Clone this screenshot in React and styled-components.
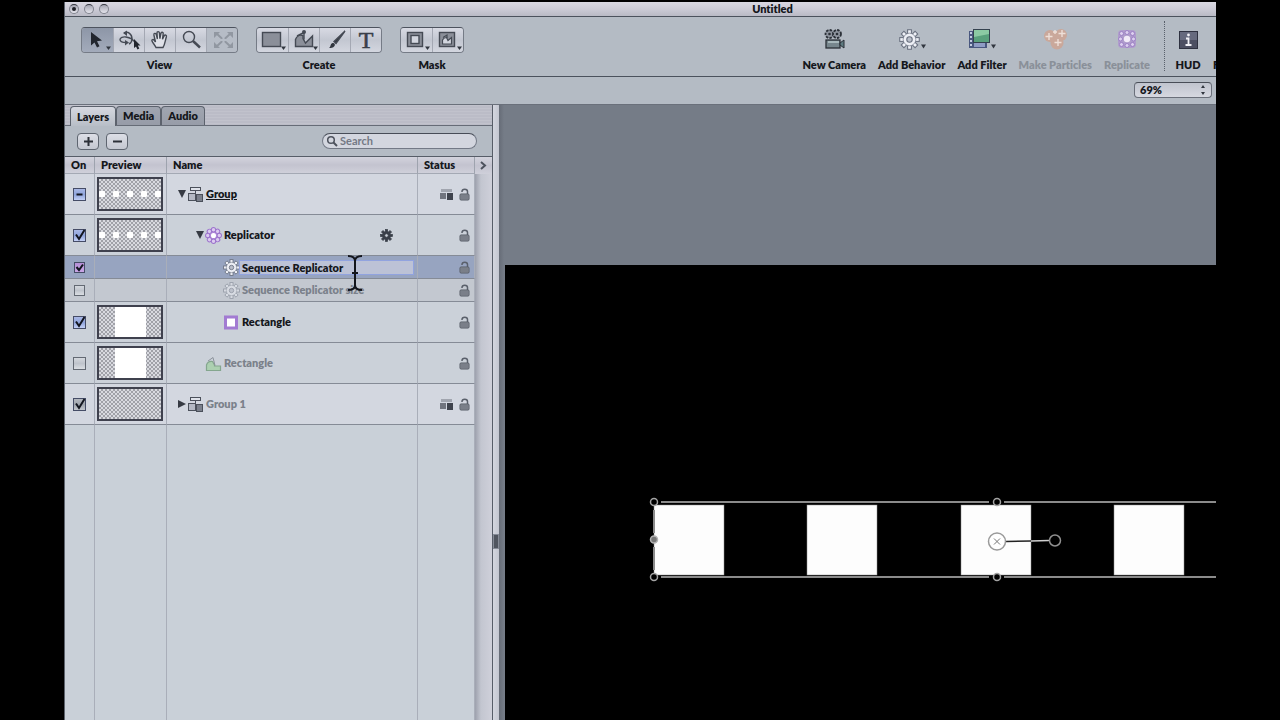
import React, { useState } from 'react';
import styled, { createGlobalStyle, css } from 'styled-components';

const GlobalStyle = createGlobalStyle`
  * {
    box-sizing: border-box;
  }

  body {
    margin: 0;
    background: #000;
    color: #15171c;
    font-family: Lato, 'Open Sans', sans-serif;
    font-size: 11px;
    font-weight: 800;
    font-variant-ligatures: none;
    line-height: 16px;
  }

  button, input, select {
    font: inherit;
    font-variant-ligatures: none;
    color: inherit;
    margin: 0;
  }
`;

const Desktop = styled.div`
  display: flex;
  min-height: 100vh;
  padding: 2px 64px 0;
  background: #000;
`;

const Window = styled.main`
  flex: 1;
  min-width: 0;
  display: flex;
  flex-direction: column;
  overflow: hidden;
  border-left: 1px solid #5d636d;
  background: #b4bbc4;
`;

const TitleBar = styled.header`
  display: flex;
  align-items: center;
  height: 15px;
  padding-left: 4px;
  background: linear-gradient(#d9d8e1, #cccbd6 50%, #b9bac5);
  border-bottom: 1px solid #4b525d;
`;

const WindowButtons = styled.div`
  display: flex;
  gap: 5px;
  width: 260px;
`;

const WindowButton = styled.button`
  display: grid;
  place-items: center;
  width: 10px;
  height: 10px;
  padding: 0;
  border: 1px solid #80838e;
  border-top-color: #33363f;
  border-radius: 50%;
  background: linear-gradient(#a4a5b1, #e4e4ec);

  &::before {
    content: '';
    width: 4px;
    height: 4px;
    border-radius: 50%;
    background: ${props => (props.$edited ? '#1d1f26' : 'transparent')};
  }
`;

const Title = styled.h1`
  flex: 1;
  margin: 0;
  font-size: 11px;
  font-weight: inherit;
  line-height: 14px;
  text-align: center;
`;

const Toolbar = styled.div`
  display: flex;
  justify-content: space-between;
  height: 60px;
  padding: 10px 0 0 16px;
  border-bottom: 1px solid #4b525d;
`;

const ToolGroups = styled.div`
  display: flex;
  gap: 18px;
`;

const ToolGroup = styled.div`
  display: flex;
  flex-direction: column;
  align-items: center;
  gap: 4px;
`;

const Segmented = styled.div`
  display: flex;
  border: 1px solid #757b86;
  border-top-color: #4d535e;
  border-radius: 4px;
  overflow: hidden;
`;

const Segment = styled.button`
  width: 31px;
  height: 24px;
  padding: 0;
  border: none;
  border-left: 1px solid #a4a8b3;
  background: ${props => (props.$pressed
    ? 'linear-gradient(#8d96a7, #a3abbb)'
    : 'linear-gradient(#d8dae3, #c3c7d1 50%, #d3d6df)')};

  &:first-child {
    border-left: none;
  }

  &:disabled {
    background: #b6bcc6;
  }

  svg {
    display: block;
  }
`;

const Actions = styled.div`
  display: flex;
  gap: 12px;
`;

const Action = styled.button`
  display: flex;
  flex-direction: column;
  align-items: center;
  gap: 6px;
  padding: 0;
  border: none;
  background: none;
  white-space: nowrap;

  &:disabled {
    color: #8a9099;
  }
`;

const ClippedAction = styled(Action)`
  align-items: flex-start;
  width: 3px;
  margin-left: -1px;
  overflow: hidden;
`;

const ActionDivider = styled.div`
  height: 50px;
  margin: -6px -3px 0 2px;
  border-left: 1px dotted #59606b;
`;

const ViewBar = styled.div`
  display: flex;
  align-items: center;
  justify-content: flex-end;
  height: 28px;
  padding: 0 4px 2px 0;
  border-bottom: 1px solid #6a707b;
`;

const ZoomBox = styled.label`
  display: grid;
  grid-template-columns: 1fr 12px;
  align-items: center;
  width: 78px;

  svg {
    grid-area: 1 / 2;
    pointer-events: none;
  }
`;

const ZoomSelect = styled.select`
  grid-area: 1 / 1 / 2 / 3;
  appearance: none;
  height: 16px;
  padding: 0 5px;
  border: 1px solid #6a6f7a;
  border-color: #484d57 #6a6f7a #6a6f7a;
  border-radius: 4px;
  background: linear-gradient(#c0c4ce, #d6d8e0);
  line-height: 14px;
`;

const Workspace = styled.div`
  flex: 1;
  display: flex;
`;

const Panel = styled.section`
  flex: 0 0 428px;
  display: flex;
  flex-direction: column;
  border-right: 1px solid #575d68;
`;

const TabBar = styled.div`
  display: flex;
  align-items: flex-end;
  height: 21px;
  padding-left: 5px;
  border-bottom: 1px solid #666c77;
  background: repeating-linear-gradient(#c1c2cc 0 1px, #bbbcc7 1px 3px);
`;

const Tab = styled.button`
  height: 19px;
  padding: 0 6px;
  border: 1px solid #5c626d;
  border-bottom: none;
  border-radius: 4px 4px 0 0;
  line-height: 18px;
  ${props => (props.$active
    ? css`
      height: 20px;
      margin-bottom: -1px;
      background: linear-gradient(#d6d8e0, #b8bec7);
    `
    : css`
      background: linear-gradient(#a0a5b0, #979ca8);
    `)}
`;

const PanelTools = styled.div`
  display: flex;
  align-items: center;
  gap: 7px;
  height: 30px;
  padding: 0 15px 0 12px;
`;

const SquareButton = styled.button`
  display: grid;
  place-items: center;
  width: 22px;
  height: 17px;
  padding: 0;
  border: 1px solid #5e6570;
  border-radius: 4px;
  background: linear-gradient(#dcdee6, #c4c8d1);
`;

const SearchBox = styled.label`
  display: flex;
  align-items: center;
  gap: 2px;
  width: 155px;
  height: 16px;
  margin-left: auto;
  padding: 0 6px 0 3px;
  border: 1px solid #737986;
  border-top-color: #474c57;
  border-radius: 8px;
  background: #d3d6df;
`;

const SearchInput = styled.input`
  flex: 1;
  min-width: 0;
  height: 14px;
  padding: 0;
  border: none;
  background: none;
  outline: none;
  font-weight: 700;

  &::placeholder {
    color: #747985;
    opacity: 1;
  }
`;

const ListArea = styled.div`
  flex: 1;
  display: flex;
  border-top: 1px solid #575d68;
`;

const ListColumn = styled.div`
  flex: 1;
  display: flex;
  flex-direction: column;
`;

const LayerTable = styled.table`
  width: 100%;
  border-collapse: separate;
  border-spacing: 0;
  table-layout: fixed;
`;

const HeadCell = styled.th`
  width: ${props => props.$width || 'auto'};
  height: 17px;
  padding: 0 0 0 6px;
  border-right: 1px solid #9ea3ae;
  border-bottom: 1px solid #a4a9b4;
  background: linear-gradient(#d3d3dd, #c3c3cf 50%, #cfd0da);
  font-weight: inherit;
  line-height: 16px;
  text-align: left;
`;

const rowColors = {
  group: '#d3d7e0',
  layer: '#cbd1d9',
  selected: '#97a4c0',
  muted: '#c3c8d0',
};

const Row = styled.tr`
  height: ${props => (props.$compact ? '23px' : '41px')};
  background: ${props => rowColors[props.$tone]};
  color: ${props => (props.$dim ? '#7b818b' : 'inherit')};
`;

const Cell = styled.td`
  padding: 0 0 0 2px;
  border-right: 1px solid #a9aeb9;
  border-bottom: 1px solid #858b96;
`;

const CheckLabel = styled.label`
  display: grid;
  place-items: center;
  width: 25px;

  svg {
    grid-area: 1 / 1;
    pointer-events: none;
  }
`;

const boxColors = {
  blue: 'linear-gradient(#a9b8e6, #8fa4dc 50%, #c3d0f6)',
  purple: 'linear-gradient(#b58fd6, #c9a6e6)',
  grey: 'linear-gradient(#b4b8c0, #9fa4ad 50%, #c2c6cd)',
  none: 'linear-gradient(#d4d8de, #bfc4cc 50%, #dadee3)',
};

const CheckInput = styled.input`
  grid-area: 1 / 1;
  appearance: none;
  width: ${props => (props.$small ? '11px' : '13px')};
  height: ${props => (props.$small ? '11px' : '13px')};
  border: 1px solid ${props => (props.$tint === 'none' ? '#636973' : '#454c66')};
  background: ${props => boxColors[props.$tint]};
`;

const Thumb = styled.div`
  display: flex;
  align-items: center;
  justify-content: center;
  gap: 8px;
  width: 66px;
  height: 34px;
  border: 2px solid #3f414e;
  background: repeating-conic-gradient(#a0a1a8 0 25%, #d9dae0 0 50%) 0 0 / 4px 4px;
`;

const ThumbDot = styled.span`
  flex: 0 0 6px;
  height: 6px;
  border-radius: 1px;
  background: #fff;
`;

const ThumbFill = styled.span`
  width: 31px;
  height: 30px;
  background: #fff;
`;

const NameLine = styled.div`
  display: flex;
  align-items: center;
  padding: 0 24px 0 ${props => 8 + props.$level * 18}px;
`;

const Disclosure = styled.button`
  display: grid;
  place-items: center;
  width: 10px;
  height: 16px;
  padding: 0;
  border: none;
  background: none;
`;

const IconSlot = styled.span`
  display: grid;
  place-items: center;
  flex: 0 0 17px;
  height: 17px;
  margin-right: 2px;
  opacity: ${props => (props.$faded ? 0.5 : 1)};
`;

const Spacer = styled.span`
  flex: 0 0 10px;
`;

const LayerName = styled.span`
  flex: 1;
  white-space: nowrap;
  text-decoration: ${props => (props.$underlined ? 'underline' : 'none')};
  text-underline-offset: 1px;
`;

const EditLine = styled(NameLine)`
  position: relative;
  padding-right: 3px;
`;

const NameInput = styled.input`
  flex: 1;
  min-width: 0;
  height: 15px;
  margin-left: -3px;
  padding: 0 2px;
  border: 1px solid #91a3df;
  background: #bcc2d6;
  line-height: 13px;
  outline: none;
`;

const Pointer = styled.svg`
  position: absolute;
  left: 177px;
  top: -5px;
  z-index: 1;
  pointer-events: none;
`;

const StatusLine = styled.div`
  display: flex;
  align-items: center;
  justify-content: flex-end;
  gap: 5px;
  padding-right: 4px;
`;

const EmptyRows = styled.div`
  flex: 1;
  display: grid;
  grid-template-columns: 30px 72px 1fr 57px;
  background: #c9d0d8;

  span {
    border-right: 1px solid #a9aeb9;
  }
`;

const ListGutter = styled.div`
  flex: 0 0 17px;
  display: flex;
  flex-direction: column;
  background: linear-gradient(90deg, #9da1ad, #c3c6d0 6px, #cfd0da);
`;

const GutterButton = styled.button`
  display: grid;
  place-items: center;
  height: 17px;
  padding: 0;
  border: none;
  background: linear-gradient(#d3d3dd, #c3c3cf 50%, #cfd0da);
`;

const Splitter = styled.div`
  flex: 0 0 5px;
  background: linear-gradient(90deg, #d4d6df, #c3c6d0);
  padding-top: 429px;

  &::before {
    content: '';
    display: block;
    width: 4px;
    height: 13px;
    border: 1px solid #868b97;
    background: #50555f;
  }
`;

const CanvasArea = styled.section`
  flex: 1;
  min-width: 0;
  display: flex;
  padding: 160px 0 0 6px;
  background: linear-gradient(90deg, #666c77, #757c87 5px);
`;

const Stage = styled.div`
  flex: 1;
  min-width: 0;
  background: #000;

  svg {
    display: block;
    width: 100%;
    height: 330px;
  }
`;

const Caret = () => <path d="M24 18.500h5l-2.500 3.500z" fill="#31363f" stroke="none" />;

const ToolIcon = ({ menu, children }) => (
  <svg width="30" height="24" viewBox="0 0 30 24" fill="none" stroke="#454a54" strokeWidth="1.4">
    {children}
    {menu && <Caret />}
  </svg>
);

const toolGroups = [
  {
    label: 'View',
    tools: [
      {
        name: 'Select',
        pressed: true,
        icon: (
          <ToolIcon menu>
            <path d="M9 4v13.500l3.500-3 2.500 5 2.500-1.200-2.500-5 5-.8z" fill="#22262e" stroke="none" />
          </ToolIcon>
        ),
      },
      {
        name: 'Orbit',
        icon: (
          <ToolIcon>
            <path d="M12 14.500c-3 0-6-1-6-3s3-3 6-2.500 7 2.500 8 4.500" />
            <path d="M10 5c4-2 8 1 8 6 0 2-1 4-3 5" />
            <path d="M11 12l4 2.500-4 3zM13 2.500L9 5l4 3z" fill="#454a54" stroke="none" />
            <path d="M20 11v9l2-1.500 1.500 3 1.800-1-1.500-3h2.700z" fill="#22262e" stroke="none" />
          </ToolIcon>
        ),
      },
      {
        name: 'Pan',
        icon: (
          <ToolIcon>
            <path
              d="M11 19.500c-1-2.500-3-4-4-6.500-.6-1.600 1.500-2 2.300-.6l1.200 1.600-1.600-7c-.4-1.800 1.800-2.300 2.300-.6l1.200 4.600-.4-6c-.1-1.700 2.200-1.900 2.400-.1l.5 5.700 1-5.300c.4-1.700 2.500-1.300 2.300.4l-.7 5.600 1.700-3.500c.8-1.500 2.700-.7 2.200.9-1.300 4-1.400 8-3.400 10.800z"
              fill="#dfe1e8"
            />
          </ToolIcon>
        ),
      },
      {
        name: 'Zoom',
        icon: (
          <ToolIcon>
            <circle cx="13" cy="9" r="5.500" />
            <path d="M17 13l7 6.500" strokeWidth="2.400" />
          </ToolIcon>
        ),
      },
      {
        name: 'Fit',
        disabled: true,
        icon: (
          <ToolIcon>
            <path d="M9 5l15 14M24 5L9 19" stroke="#9197a1" strokeWidth="2" />
            <path d="M7 4h6l-6 6zM26 4h-6l6 6zM7 20h6l-6-6zM26 20h-6l6-6z" fill="#9197a1" stroke="none" />
            <path d="M14 12h5M16.500 9.500v5" stroke="#b6bcc6" strokeWidth="2" />
          </ToolIcon>
        ),
      },
    ],
  },
  {
    label: 'Create',
    tools: [
      {
        name: 'Rectangle',
        icon: (
          <ToolIcon menu>
            <rect x="5.500" y="4.500" width="18" height="14" fill="#8b8f99" />
          </ToolIcon>
        ),
      },
      {
        name: 'Bezier',
        icon: (
          <ToolIcon menu>
            <path d="M6.500 18.500v-7c1-3 4-5 7.500-4v3l2.500 4.500L23.500 8v10.500z" fill="#8b8f99" />
            <path d="M8 8l7-3.500v7" />
            <circle cx="15" cy="4" r="2" fill="#454a54" stroke="none" />
          </ToolIcon>
        ),
      },
      {
        name: 'Paint',
        icon: (
          <ToolIcon>
            <path d="M25 3L14 13.500l2 2z" fill="#31363f" />
            <path d="M9 20c2-1 1-4 3.500-5 2-.5 3 1.500 2 3-1.500 2-3.500 2-5.500 2z" fill="#31363f" stroke="none" />
          </ToolIcon>
        ),
      },
      {
        name: 'Text',
        icon: (
          <ToolIcon>
            <text
              x="15"
              y="20"
              textAnchor="middle"
              fill="#3a3f49"
              stroke="#3a3f49"
              strokeWidth=".6"
              fontFamily="Liberation Serif, serif"
              fontSize="24"
              fontWeight="400"
            >
              T
            </text>
          </ToolIcon>
        ),
      },
    ],
  },
  {
    label: 'Mask',
    tools: [
      {
        name: 'Rectangle mask',
        icon: (
          <ToolIcon menu>
            <rect x="6.500" y="4.500" width="15" height="14" fill="#8b8f99" />
            <rect x="10" y="7.500" width="8" height="8" fill="#d3d6df" />
          </ToolIcon>
        ),
      },
      {
        name: 'Bezier mask',
        icon: (
          <ToolIcon menu>
            <rect x="6.500" y="4.500" width="15" height="14" fill="#8b8f99" />
            <path d="M9.500 16v-4c1-2 2-2.500 4-2.500l1.500 3 3.500-3V16z" fill="#d3d6df" strokeWidth="1.200" />
            <path d="M10 9.500l4-2.500v3" strokeWidth="1.200" />
          </ToolIcon>
        ),
      },
    ],
  },
];

const teeth = [0, 45, 90, 135, 180, 225, 270, 315];

const GearIcon = ({ size = 17, fill = '#eef0f6', line = '#69707f', hole = '#b9bec9' }) => (
  <svg width={size} height={size} viewBox="-10 -10 20 20">
    {teeth.map(angle => (
      <rect
        key={angle}
        x="-1.800"
        y="-9.300"
        width="3.600"
        height="6"
        fill={fill}
        stroke={line}
        strokeWidth="1"
        transform={`rotate(${angle})`}
      />
    ))}
    <circle r="6" fill={fill} stroke={line} strokeWidth=".6" />
    <circle r="2.600" fill={hole} stroke={line} strokeWidth="1" />
  </svg>
);

const ReplicatorIcon = ({ size = 17 }) => (
  <svg width={size} height={size} viewBox="-10 -10 20 20">
    <circle r="8" fill="#b48fdc" />
    {teeth.map(angle => (
      <circle
        key={angle}
        cy="-6.800"
        r="2.600"
        fill="#dccbf0"
        stroke="#9c74cc"
        strokeWidth="1.200"
        transform={`rotate(${angle})`}
      />
    ))}
    <circle r="3" fill="#fff" />
  </svg>
);

const GroupIcon = () => (
  <svg width="17" height="17" viewBox="0 0 17 17" stroke="#4b505b" fill="none">
    <rect x="3.500" y="1.500" width="10" height="3" fill="#dfe2ea" />
    <path d="M8.500 5v3" />
    <rect x="1.500" y="7.500" width="7" height="7" fill="#b4b8c4" />
    <rect x="9.500" y="8.500" width="6" height="7" fill="#7b808c" />
  </svg>
);

const SquareIcon = () => (
  <svg width="17" height="17" viewBox="0 0 17 17">
    <rect x="2.500" y="3" width="11" height="11" fill="#fff" stroke="#a27bd2" strokeWidth="3" />
  </svg>
);

const ShapeIcon = () => (
  <svg width="17" height="17" viewBox="0 0 17 17">
    <path d="M1.500 15.500V10c1-3 3-4 6-3.500l2 3.500v1h6v4.500z" fill="#8fd08a" stroke="#3f7d45" strokeWidth="1.200" />
    <path d="M3 6l5-3.500 2 8" fill="none" stroke="#4f565f" />
  </svg>
);

const LockIcon = () => (
  <svg width="11" height="13" viewBox="0 0 11 13">
    <path d="M3 4V3.500C3 .5 8.500.5 8.500 3.500V6" fill="none" stroke="#5a606b" strokeWidth="1.500" />
    <rect x="1" y="6" width="9" height="6" rx="1" fill="#8f949d" stroke="#555a65" />
    <path d="M2 8h7M2 10h7" stroke="#555a65" strokeWidth=".7" />
  </svg>
);

const StackIcon = () => (
  <svg width="15" height="13" viewBox="0 0 15 13">
    <rect x="2" y="1" width="11" height="3" fill="#a1a5af" />
    <rect x="1" y="5" width="6" height="6" fill="#71757f" />
    <rect x="8" y="5" width="6" height="7" fill="#3f434d" />
  </svg>
);

const MagnifierIcon = () => (
  <svg width="12" height="12" viewBox="0 0 12 12" fill="none" stroke="#4d525d">
    <circle cx="5" cy="5" r="3.300" strokeWidth="1.500" />
    <path d="M7.500 7.500L11 11" strokeWidth="2" />
  </svg>
);

const CameraIcon = () => (
  <svg width="28" height="24" viewBox="0 0 28 24">
    <circle cx="9.500" cy="7" r="4" fill="#8d939d" stroke="#2b3038" strokeWidth="1.800" strokeDasharray="2.500 1.200" />
    <circle cx="17" cy="7" r="4" fill="#8d939d" stroke="#2b3038" strokeWidth="1.800" strokeDasharray="2.500 1.200" />
    <circle cx="9.500" cy="7" r="1.300" fill="#2b3038" />
    <circle cx="17" cy="7" r="1.300" fill="#2b3038" />
    <rect x="6" y="13" width="14" height="8" fill="#77868d" stroke="#2b3038" strokeWidth="1.300" />
    <path d="M8 15h11" stroke="#b9c9cd" strokeWidth="1.500" />
    <path d="M20 16l4-3v8l-4-3z" fill="#5e7a80" stroke="#2b3038" />
  </svg>
);

const BehaviorIcon = () => (
  <svg width="28" height="24" viewBox="0 0 28 24">
    <svg x="1" y="2" width="21" height="21">
      <GearIcon size={21} />
    </svg>
    <path d="M23 17.500h5l-2.500 4z" fill="#31363f" />
  </svg>
);

const FilterIcon = () => (
  <svg width="28" height="24" viewBox="0 0 28 24">
    <rect x="1" y="4" width="18" height="17" fill="#49577f" />
    <path d="M3 5v15" stroke="#c3cbe0" strokeWidth="2" strokeDasharray="2 2" />
    <rect x="6" y="15" width="11" height="5" fill="#8f9cc4" />
    <rect x="5.500" y="2.500" width="16" height="13" fill="#59a07c" stroke="#35424f" />
    <path d="M6 3h15v4L6 10z" fill="#8ccaa4" />
    <path d="M23 17.500h5l-2.500 4z" fill="#31363f" />
  </svg>
);

const ParticlesIcon = () => (
  <svg width="28" height="24" viewBox="0 0 28 24">
    <g fill="#cfa594" opacity=".85">
      <circle cx="9" cy="9" r="6" />
      <circle cx="20" cy="8" r="6" />
      <circle cx="16" cy="16" r="6.500" />
    </g>
    <path
      d="M8 6v7M4.500 9.500h7M21 3v7M17.500 6.500h7M17 12v7M13.500 15.500h7M14 3v4M12 5h4"
      stroke="#eedfd8"
      strokeWidth="1.400"
    />
  </svg>
);

const ReplicateIcon = () => (
  <svg width="28" height="24" viewBox="0 0 28 24">
    <rect x="5" y="3" width="18" height="18" rx="4" fill="#ad92cf" opacity=".75" />
    <g fill="#dccfee" stroke="#9476c0" strokeWidth=".8">
      <circle cx="8.500" cy="6.500" r="2" />
      <circle cx="14" cy="5.500" r="2" />
      <circle cx="19.500" cy="6.500" r="2" />
      <circle cx="7.500" cy="12" r="2" />
      <circle cx="20.500" cy="12" r="2" />
      <circle cx="8.500" cy="17.500" r="2" />
      <circle cx="14" cy="18.500" r="2" />
      <circle cx="19.500" cy="17.500" r="2" />
    </g>
    <circle cx="14" cy="12" r="3.200" fill="#f1eaf8" />
  </svg>
);

const HudIcon = () => (
  <svg width="28" height="24" viewBox="0 0 28 24">
    <rect x="5.500" y="4.500" width="18" height="17" fill="#4c4f62" stroke="#2e3140" />
    <path d="M6 5h17v8H6z" fill="#666a7e" />
    <circle cx="14.500" cy="8" r="1.400" fill="#f0f0f5" />
    <path d="M12 11.500h2.500v6M11.500 18h6" fill="none" stroke="#f0f0f5" strokeWidth="1.800" />
  </svg>
);

const squares = [149, 302, 456, 609];

const actions = [
  { label: 'New Camera', icon: <CameraIcon /> },
  { label: 'Add Behavior', icon: <BehaviorIcon /> },
  { label: 'Add Filter', icon: <FilterIcon /> },
  { label: 'Make Particles', icon: <ParticlesIcon />, disabled: true },
  { label: 'Replicate', icon: <ReplicateIcon />, disabled: true },
];

const layers = [
  { name: 'Group', level: 0, tone: 'group', tint: 'blue', mark: 'mixed', thumb: 'dots', open: true, icon: <GroupIcon />, underlined: true, stack: true },
  { name: 'Replicator', level: 1, tone: 'layer', tint: 'blue', mark: 'tick', thumb: 'dots', open: true, icon: <ReplicatorIcon />, gear: true },
  { name: 'Sequence Replicator', level: 2, tone: 'selected', tint: 'purple', mark: 'tick', compact: true, editing: true, icon: <GearIcon /> },
  { name: 'Sequence Replicator size', level: 2, tone: 'muted', tint: 'none', compact: true, dim: true, faded: true, icon: <GearIcon /> },
  { name: 'Rectangle', level: 2, tone: 'layer', tint: 'blue', mark: 'tick', thumb: 'fill', icon: <SquareIcon /> },
  { name: 'Rectangle', level: 1, tone: 'layer', tint: 'none', thumb: 'fill', dim: true, faded: true, icon: <ShapeIcon /> },
  { name: 'Group 1', level: 0, tone: 'group', tint: 'grey', mark: 'tick', thumb: 'empty', open: false, dim: true, icon: <GroupIcon />, stack: true },
];

const EnableBox = ({ layer }) => {
  const [checked, setChecked] = useState(Boolean(layer.mark));

  return (
    <CheckLabel>
      <CheckInput
        type="checkbox"
        aria-label={`${layer.name} on`}
        checked={checked}
        onChange={e => setChecked(e.target.checked)}
        $tint={layer.tint}
        $small={layer.compact}
      />
      {checked && (
        <svg width="17" height="17" viewBox="0 0 17 17" fill="none" stroke="#12151f" strokeWidth="2">
          {layer.mark === 'mixed'
            ? <path d="M5.500 8.500h6" />
            : <path d={layer.compact ? 'M5.500 8l2.500 3 4-5.500' : 'M5 7.500l3 4.500L13.500 3'} />}
        </svg>
      )}
    </CheckLabel>
  );
};

const Preview = ({ kind }) => {
  if (!kind) return null;
  return (
    <Thumb>
      {kind === 'dots' && [0, 1, 2, 3, 4].map(i => <ThumbDot key={i} />)}
      {kind === 'fill' && <ThumbFill />}
    </Thumb>
  );
};

const LayerRow = ({ layer }) => {
  const [name, setName] = useState(layer.name);
  const Line = layer.editing ? EditLine : NameLine;

  return (
    <Row $tone={layer.tone} $compact={layer.compact} $dim={layer.dim}>
      <Cell><EnableBox layer={layer} /></Cell>
      <Cell><Preview kind={layer.thumb} /></Cell>
      <Cell>
        <Line $level={layer.level}>
          {layer.open === undefined ? <Spacer /> : (
            <Disclosure aria-label={`Toggle ${layer.name}`}>
              <svg width="8" height="8" viewBox="0 0 8 8" fill="#363a43">
                <path d={layer.open ? 'M0 0h8L4 8z' : 'M0 0v8l8-4z'} />
              </svg>
            </Disclosure>
          )}
          <IconSlot $faded={layer.faded}>{layer.icon}</IconSlot>
          {layer.editing ? (
            <NameInput aria-label="Layer name" value={name} onChange={e => setName(e.target.value)} />
          ) : (
            <LayerName $underlined={layer.underlined}>{name}</LayerName>
          )}
          {layer.gear && <GearIcon size={13} fill="#3a3f49" line="#3a3f49" hole="#cbd1d9" />}
          {layer.editing && (
            <Pointer width="18" height="38" viewBox="0 0 18 38" fill="none" stroke="#14161c" strokeWidth="2">
              <path d="M2 2c4 0 7 1 7 5 0-4 3-5 7-5M9 6v26M2 36c4 0 7-1 7-5 0 4 3 5 7 5M6 19h6" />
            </Pointer>
          )}
        </Line>
      </Cell>
      <Cell>
        <StatusLine>
          {layer.stack && <StackIcon />}
          <LockIcon />
        </StatusLine>
      </Cell>
    </Row>
  );
};

const LayersPanel = () => {
  const [tab, setTab] = useState('Layers');

  return (
    <Panel>
      <TabBar role="tablist">
        {['Layers', 'Media', 'Audio'].map(label => (
          <Tab
            key={label}
            role="tab"
            aria-selected={tab === label}
            $active={tab === label}
            onClick={() => setTab(label)}
          >
            {label}
          </Tab>
        ))}
      </TabBar>
      <PanelTools>
        <SquareButton aria-label="Add">
          <svg width="9" height="9" viewBox="0 0 9 9" stroke="#2c3038" strokeWidth="2">
            <path d="M0 4.500h9M4.500 0v9" />
          </svg>
        </SquareButton>
        <SquareButton aria-label="Remove">
          <svg width="9" height="9" viewBox="0 0 9 9" stroke="#2c3038" strokeWidth="2">
            <path d="M0 4.500h9" />
          </svg>
        </SquareButton>
        <SearchBox>
          <MagnifierIcon />
          <SearchInput type="text" placeholder="Search" aria-label="Search" />
        </SearchBox>
      </PanelTools>
      <ListArea>
        <ListColumn>
          <LayerTable>
            <thead>
              <tr>
                <HeadCell $width="30px">On</HeadCell>
                <HeadCell $width="72px">Preview</HeadCell>
                <HeadCell>Name</HeadCell>
                <HeadCell $width="57px">Status</HeadCell>
              </tr>
            </thead>
            <tbody>
              {layers.map((layer, i) => <LayerRow key={i} layer={layer} />)}
            </tbody>
          </LayerTable>
          <EmptyRows>
            <span />
            <span />
            <span />
            <span />
          </EmptyRows>
        </ListColumn>
        <ListGutter>
          <GutterButton aria-label="More columns">
            <svg width="7" height="9" viewBox="0 0 7 9" fill="none" stroke="#4d525d" strokeWidth="2">
              <path d="M1 1l4 3.500L1 8" />
            </svg>
          </GutterButton>
        </ListGutter>
      </ListArea>
    </Panel>
  );
};

const Canvas = () => (
  <CanvasArea>
    <Stage>
      <svg>
        {squares.map(x => (
          <rect key={x} x={x} y="240" width="70" height="70" fill="#fdfdfd" stroke="#8d8d8d" strokeWidth=".5" />
        ))}
        <g stroke="#8b8b8b" strokeWidth="2">
          <line x1="156" y1="237" x2="484" y2="237" />
          <line x1="499" y1="237" x2="100%" y2="237" />
          <line x1="156" y1="312" x2="484" y2="312" />
          <line x1="499" y1="312" x2="100%" y2="312" />
          <line x1="149" y1="245" x2="149" y2="268" />
          <line x1="149" y1="282" x2="149" y2="305" />
        </g>
        <g fill="#000" stroke="#a4a4a4" strokeWidth="1.500">
          <circle cx="149" cy="237" r="3.500" />
          <circle cx="149" cy="312" r="3.500" />
          <circle cx="492" cy="237" r="3.500" />
          <circle cx="492" cy="312" r="3.500" />
        </g>
        <circle cx="149" cy="274.500" r="3.500" fill="#777" stroke="#b4b4b4" strokeWidth="1.500" />
        <line x1="501" y1="276.500" x2="526" y2="276" stroke="#222" strokeWidth="1.500" />
        <line x1="526" y1="276" x2="544" y2="275.500" stroke="#d0d0d0" strokeWidth="1.500" />
        <circle cx="492" cy="276.500" r="8.500" fill="#fff" stroke="#9a9a9a" strokeWidth="1.500" />
        <path d="M489 273.500l6 6M495 273.500l-6 6" stroke="#777" />
        <circle cx="550" cy="275.500" r="5.500" fill="none" stroke="#909090" strokeWidth="1.500" />
      </svg>
    </Stage>
  </CanvasArea>
);

const App = () => (
  <>
    <GlobalStyle />
    <Desktop>
      <Window>
        <TitleBar>
          <WindowButtons>
            <WindowButton aria-label="Close" $edited />
            <WindowButton aria-label="Minimize" />
            <WindowButton aria-label="Zoom window" />
          </WindowButtons>
          <Title>Untitled</Title>
        </TitleBar>
        <Toolbar>
          <ToolGroups>
            {toolGroups.map(group => (
              <ToolGroup key={group.label}>
                <Segmented>
                  {group.tools.map(tool => (
                    <Segment
                      key={tool.name}
                      aria-label={tool.name}
                      $pressed={tool.pressed}
                      disabled={tool.disabled}
                    >
                      {tool.icon}
                    </Segment>
                  ))}
                </Segmented>
                {group.label}
              </ToolGroup>
            ))}
          </ToolGroups>
          <Actions>
            {actions.map(({ label, icon, disabled }) => (
              <Action key={label} disabled={disabled}>
                {icon}
                {label}
              </Action>
            ))}
            <ActionDivider />
            <Action>
              <HudIcon />
              HUD
            </Action>
            <ClippedAction>
              <svg width="28" height="24" />
              File
            </ClippedAction>
          </Actions>
        </Toolbar>
        <ViewBar>
          <ZoomBox>
            <ZoomSelect aria-label="Zoom level" defaultValue="69%">
              <option>50%</option>
              <option>69%</option>
              <option>100%</option>
            </ZoomSelect>
            <svg width="6" height="10" viewBox="0 0 6 10" fill="#31363f">
              <path d="M3 0l2 3H1zM3 10l2-3H1z" />
            </svg>
          </ZoomBox>
        </ViewBar>
        <Workspace>
          <LayersPanel />
          <Splitter />
          <Canvas />
        </Workspace>
      </Window>
    </Desktop>
  </>
);

export default App;
